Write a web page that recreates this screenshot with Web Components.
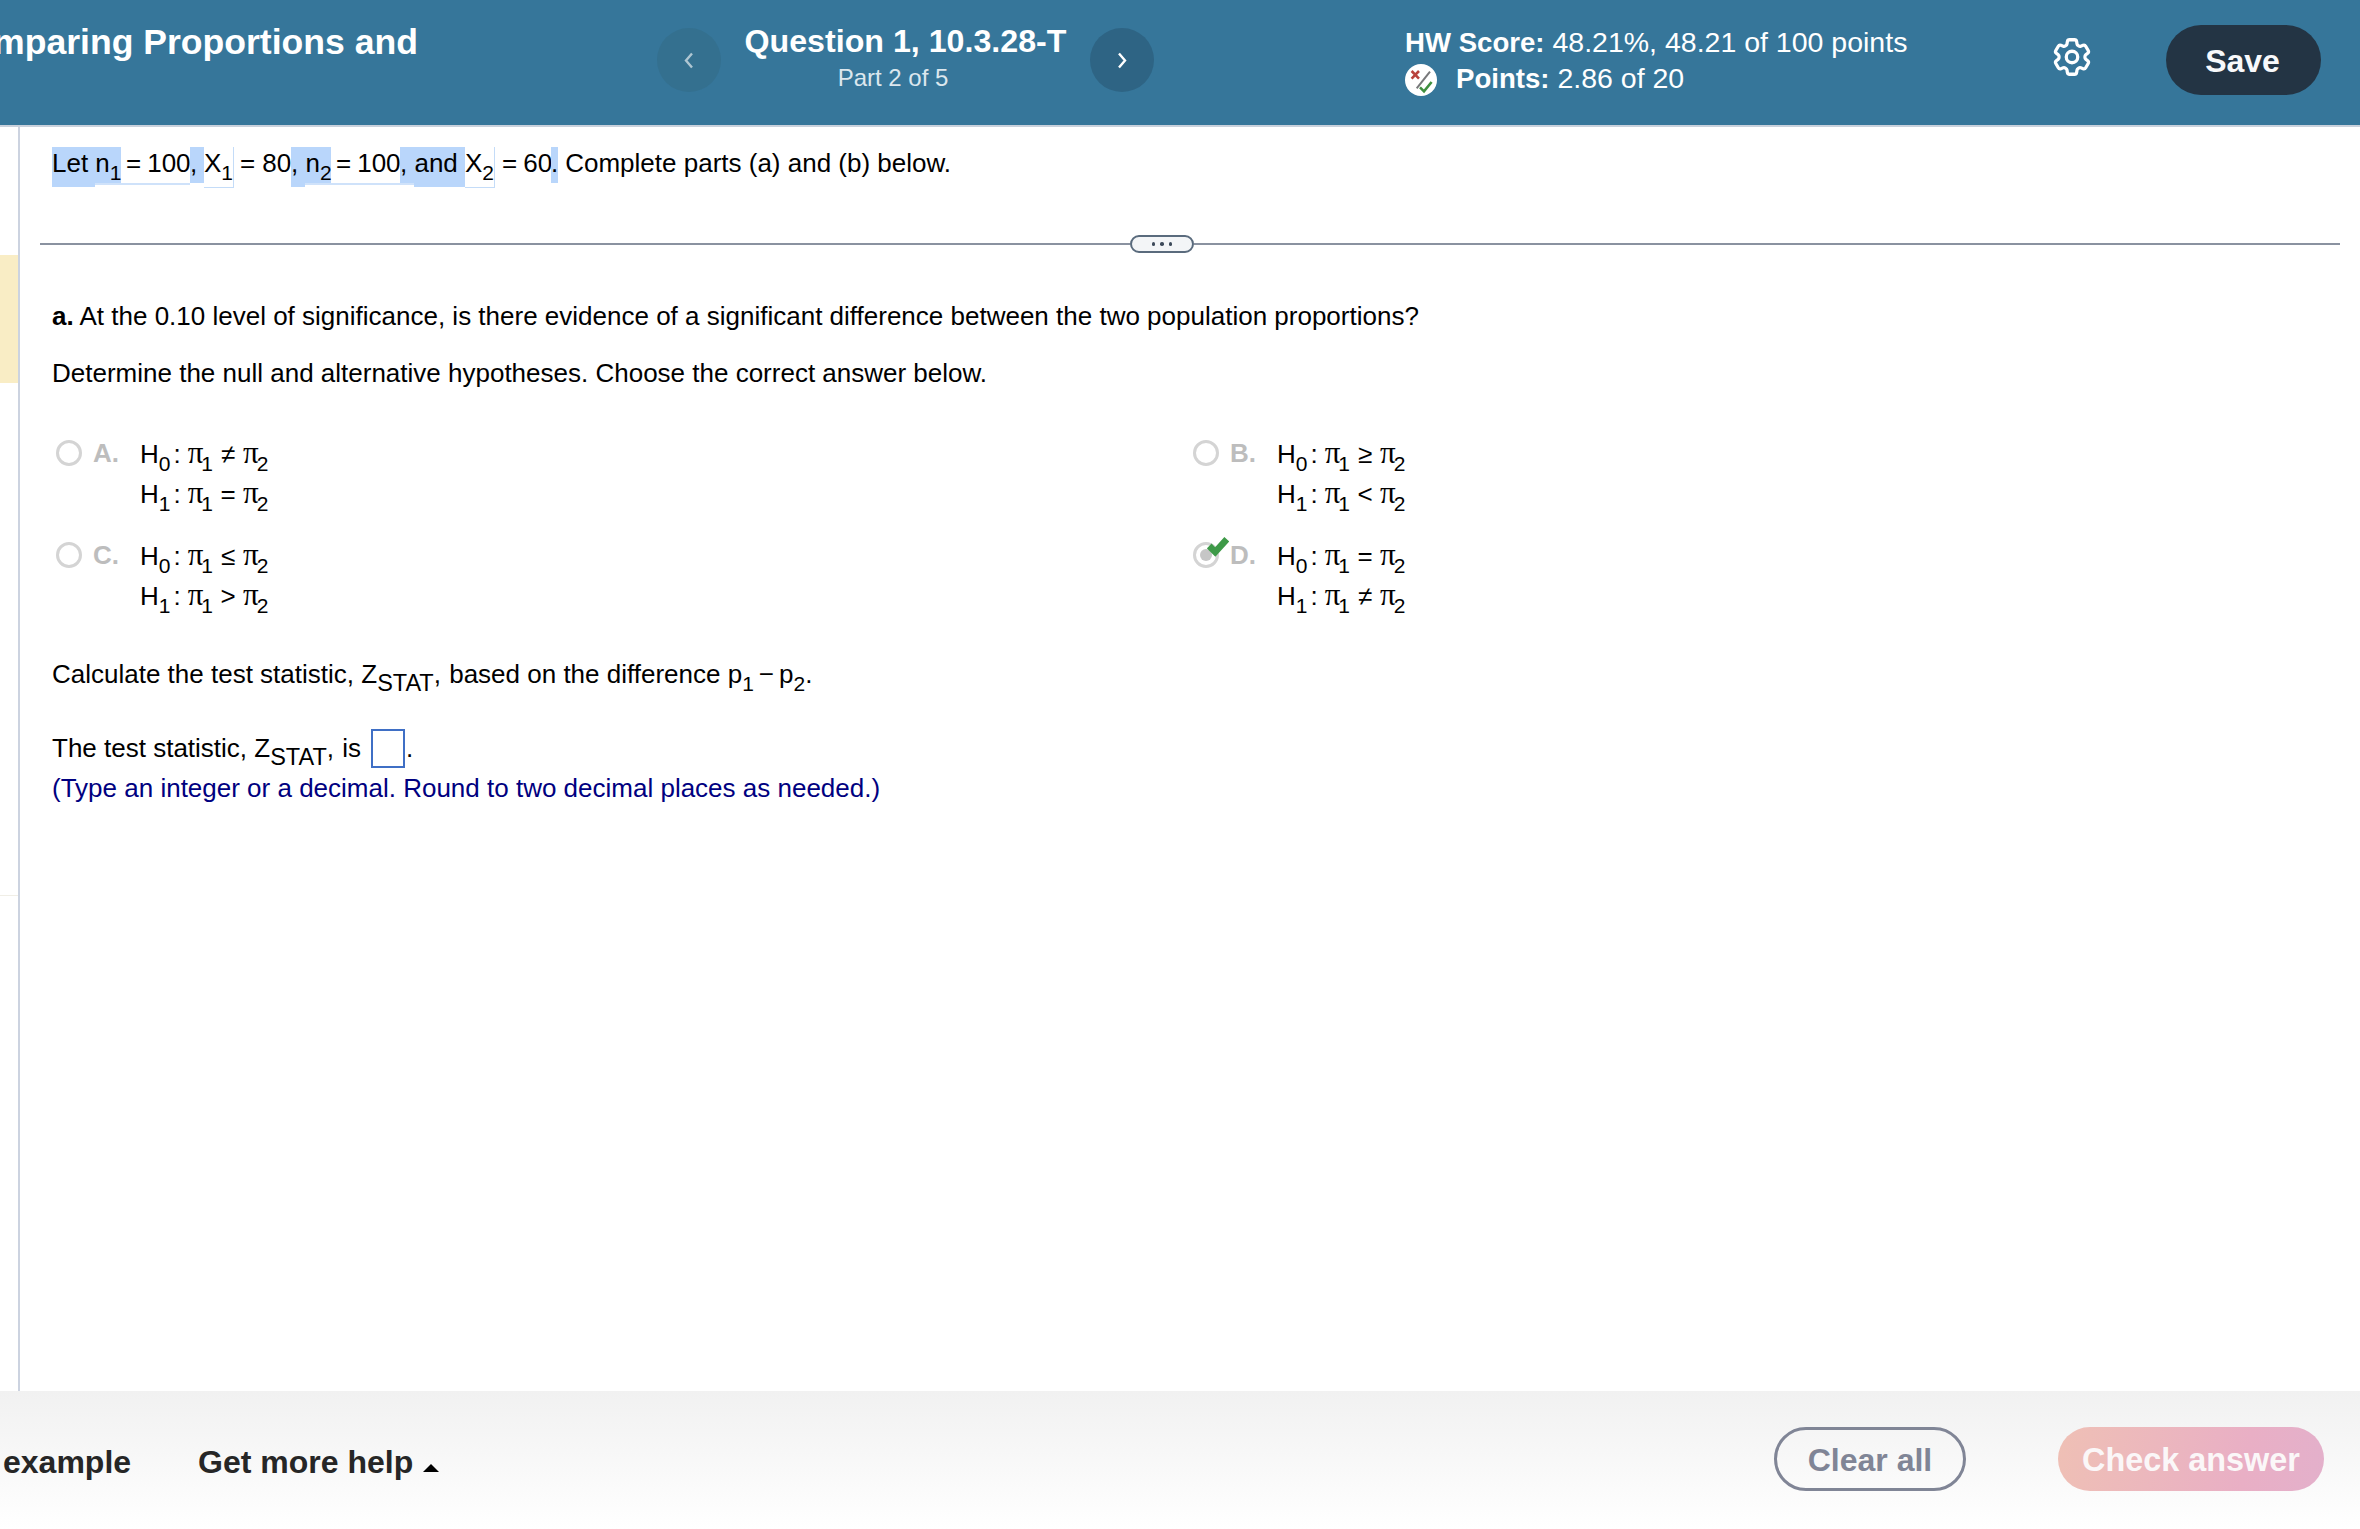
<!DOCTYPE html>
<html lang="en">
<head>
<meta charset="utf-8">
<title>Homework</title>
<style>
  html, body { margin: 0; height: 100%; background: #fff; overflow: hidden; }
  body { font-family: "Liberation Sans", Arial, sans-serif; }
</style>
</head>
<body>
<hw-app>
  <hw-header slot="header"></hw-header>
  <hw-sidebar slot="side"></hw-sidebar>
  <given-line></given-line>
  <pane-divider></pane-divider>
  <question-text></question-text>
  <choice-grid>
    <choice-option letter="A" rel0="≠" rel1="="></choice-option>
    <choice-option letter="B" rel0="≥" rel1="&lt;"></choice-option>
    <choice-option letter="C" rel0="≤" rel1="&gt;"></choice-option>
    <choice-option letter="D" rel0="=" rel1="≠" picked></choice-option>
  </choice-grid>
  <stat-text></stat-text>
  <hw-footer slot="footer"></hw-footer>
</hw-app>

<script>
const MATH_CSS = `
  sub { font-size: 21px; line-height: 0; vertical-align: -8px; }
`;

class HwApp extends HTMLElement {
  constructor() {
    super();
    this.attachShadow({ mode: "open" });
  }
  connectedCallback() {
    this.shadowRoot.innerHTML = `
      <style>
        :host { display: flex; flex-direction: column; width: 2360px; height: 1529px; }
        .middle { flex: 1; display: flex; min-height: 0; }
        .content { flex: 1; min-width: 0; padding: 20px 0 0 32px; }
      </style>
      <slot name="header"></slot>
      <div class="middle">
        <slot name="side"></slot>
        <div class="content"><slot></slot></div>
      </div>
      <slot name="footer"></slot>
    `;
  }
}

class NavButton extends HTMLElement {
  constructor() {
    super();
    this.attachShadow({ mode: "open" });
  }
  connectedCallback() {
    const next = this.getAttribute("dir") == "next";
    const path = next ? "M2 1.5 L8 8.5 L2 15.5" : "M8 1.5 L2 8.5 L8 15.5";
    this.shadowRoot.innerHTML = `
      <style>
        :host {
          display: flex; align-items: center; justify-content: center;
          width: 64px; height: 64px; border-radius: 50%; flex: none;
          background: ${next ? "#2e6484" : "#34708f"};
        }
        svg { width: 10px; height: 17px; fill: none; stroke: #fff; stroke-width: 2.4; opacity: ${next ? 1 : 0.6}; }
      </style>
      <svg viewBox="0 0 10 17"><path d="${path}"/></svg>
    `;
  }
}

class PointsIcon extends HTMLElement {
  constructor() {
    super();
    this.attachShadow({ mode: "open" });
  }
  connectedCallback() {
    this.shadowRoot.innerHTML = `
      <style>
        :host { display: block; width: 32px; height: 32px; flex: none; position: relative; top: 1px; }
        svg { display: block; }
      </style>
      <svg width="32" height="32" viewBox="0 0 32 32" fill="none">
        <circle cx="16" cy="16" r="16" fill="#fff"/>
        <path d="M6.6 7 L14 14.6 M14 7 L6.6 14.6" stroke="#b8423c" stroke-width="2.6"/>
        <path d="M25 7.7 L11.7 24.3" stroke="#77787a" stroke-width="2"/>
        <path d="M15 23.4 L19 27.4 L26.6 18" stroke="#3f8f3f" stroke-width="2.6"/>
      </svg>
    `;
  }
}

class HwHeader extends HTMLElement {
  constructor() {
    super();
    this.attachShadow({ mode: "open" });
  }
  connectedCallback() {
    this.shadowRoot.innerHTML = `
      <style>
        :host {
          display: flex; align-items: flex-start; height: 125px; flex: none;
          background: #36769a; color: #fff; border-bottom: 2px solid #c9d1dc;
        }
        .title {
          width: 418px; flex: none; margin-top: 21px; display: flex; justify-content: flex-end; overflow: hidden;
          font: bold 35.6px/42px "Liberation Sans", Arial, sans-serif; white-space: nowrap;
        }
        .prev { margin: 28px 0 0 239px; }
        .next { margin-top: 28px; }
        .center { width: 369px; text-align: center; padding-top: 22px; }
        .q { font: bold 32.2px/38px "Liberation Sans", Arial, sans-serif; white-space: nowrap; }
        .part { font: 24px/30px "Liberation Sans", Arial, sans-serif; color: #dce7ee; margin-top: 3px; padding-right: 25px; }
        .score { width: 644px; margin: 24px 0 0 251px; font: 28.5px/36px "Liberation Sans", Arial, sans-serif; white-space: nowrap; }
        .pts { display: flex; align-items: center; gap: 19px; margin-top: -1px; }
        b { font-weight: bold; font-size: 27.6px; }
        .gear { width: 46px; height: 46px; margin-top: 34px; flex: none; fill: none; stroke: #fff; stroke-width: 1.7; stroke-linejoin: round; }
        .save {
          width: 155px; height: 70px; margin: 25px 0 0 71px; border-radius: 35px; background: #233444;
          display: flex; align-items: center; justify-content: center; padding: 3px 2px 0 0; box-sizing: border-box;
          font: bold 32px "Liberation Sans", Arial, sans-serif; color: #f8f9fb;
        }
      </style>
      <div class="title">mparing Proportions and</div>
      <nav-button class="prev" dir="prev"></nav-button>
      <div class="center">
        <div class="q">Question 1, 10.3.28-T</div>
        <div class="part">Part 2 of 5</div>
      </div>
      <nav-button class="next" dir="next"></nav-button>
      <div class="score">
        <div><b>HW Score:</b> 48.21%, 48.21 of 100 points</div>
        <div class="pts"><points-icon></points-icon><span><b>Points:</b> 2.86 of 20</span></div>
      </div>
      <svg class="gear" viewBox="0 0 24 24">
        <path d="M9.594 3.94c.09-.542.56-.94 1.11-.94h2.593c.55 0 1.02.398 1.11.94l.213 1.281c.063.374.313.686.645.87.074.04.147.083.22.127.324.196.72.257 1.075.124l1.217-.456a1.125 1.125 0 011.37.49l1.296 2.247a1.125 1.125 0 01-.26 1.431l-1.003.827c-.293.24-.438.613-.431.992a6.759 6.759 0 010 .255c-.007.378.138.75.43.99l1.005.828c.424.35.534.954.26 1.43l-1.298 2.247a1.125 1.125 0 01-1.369.491l-1.217-.456c-.355-.133-.75-.072-1.076.124a6.57 6.57 0 01-.22.128c-.331.183-.581.495-.644.869l-.213 1.28c-.09.543-.56.941-1.11.941h-2.594c-.55 0-1.02-.398-1.11-.94l-.213-1.281c-.062-.374-.312-.686-.644-.87a6.52 6.52 0 01-.22-.127c-.325-.196-.72-.257-1.076-.124l-1.217.456a1.125 1.125 0 01-1.369-.49l-1.297-2.247a1.125 1.125 0 01.26-1.431l1.004-.827c.292-.24.437-.613.43-.992a6.932 6.932 0 010-.255c.007-.378-.138-.75-.43-.99l-1.004-.828a1.125 1.125 0 01-.26-1.43l1.297-2.247a1.125 1.125 0 011.37-.491l1.216.456c.356.133.751.072 1.076-.124.072-.044.146-.087.22-.128.332-.183.582-.495.644-.869l.214-1.281z"/>
        <circle cx="12" cy="12" r="3"/>
      </svg>
      <div class="save">Save</div>
    `;
  }
}

class HwSidebar extends HTMLElement {
  constructor() {
    super();
    this.attachShadow({ mode: "open" });
  }
  connectedCallback() {
    this.shadowRoot.innerHTML = `
      <style>
        :host { display: block; width: 18px; flex: none; border-right: 2px solid #ccd3e0; padding-top: 128px; box-sizing: content-box; }
        .strip { height: 128px; background: #f9edc5; }
        .tick { height: 1px; margin-top: 512px; background: #f0eee6; }
      </style>
      <div class="strip"></div>
      <div class="tick"></div>
    `;
  }
}

class GivenLine extends HTMLElement {
  constructor() {
    super();
    this.attachShadow({ mode: "open" });
  }
  connectedCallback() {
    this.shadowRoot.innerHTML = `
      <style>
        :host { display: flex; height: 41px; font-size: 26px; line-height: 32px; color: #000; white-space: pre; }
        ${MATH_CSS}
        span { display: block; height: 40px; flex: none; box-sizing: border-box; }
        .hl { background: linear-gradient(#b9d6fb, #b9d6fb) 0 0 / 100% 36px no-repeat; }
        .low { background:
          linear-gradient(#b9d6fb, #b9d6fb) 0 0 / 100% 36px no-repeat,
          linear-gradient(#b9d6fb, #b9d6fb) 0 36px / var(--low) 4px no-repeat,
          linear-gradient(#cfe2fa, #cfe2fa) 0 36px / 100% 2px no-repeat; }
        .lowr { background:
          linear-gradient(#b9d6fb, #b9d6fb) 0 0 / 100% 36px no-repeat,
          linear-gradient(#b9d6fb, #b9d6fb) 100% 36px / var(--low) 4px no-repeat,
          linear-gradient(#cfe2fa, #cfe2fa) 0 36px / 100% 2px no-repeat; }
        .bb { background: linear-gradient(#cfe2fa, #cfe2fa) 0 36px / 100% 2px no-repeat; }
        .x { height: 41px; border-right: 1.5px solid #c4dcf8; border-bottom: 1.5px solid #c4dcf8; }
        i { font-style: normal; margin: 0 6px 0 5px; }
        .eq80 { margin: 0 7px 0 6px; }
        .eq60 { margin-left: 7px; }
      </style>
      <span class="low" style="width:69px;--low:43px">Let n<sub>1</sub></span>
      <span class="bb" style="width:69px"><i>=</i>100</span>
      <span class="hl" style="width:14px">, </span>
      <span class="x" style="width:30px">X<sub>1</sub></span>
      <span style="width:57px"><i class="eq80">=</i>80</span>
      <span class="low" style="width:40px;--low:14px">, n<sub>2</sub></span>
      <span class="bb" style="width:69px"><i>=</i>100</span>
      <span class="lowr" style="width:65px;--low:51px">, and </span>
      <span class="x" style="width:30px">X<sub>2</sub></span>
      <span style="width:56px"><i class="eq60">=</i>60</span>
      <span class="hl" style="width:7px">.</span>
      <span> Complete parts (a) and (b) below.</span>
    `;
  }
}

class PaneDivider extends HTMLElement {
  constructor() {
    super();
    this.attachShadow({ mode: "open" });
  }
  connectedCallback() {
    this.shadowRoot.innerHTML = `
      <style>
        :host { display: flex; align-items: center; height: 18px; margin: 47px 20px 0 -12px; }
        .line { height: 2.5px; background: #8a92a0; }
        .left { width: 1090px; flex: none; }
        .right { flex: 1; }
        .pill {
          width: 64px; height: 18px; flex: none; box-sizing: border-box; border: 2px solid #5a6b7d; border-radius: 9px;
          background: #f3f5f7; display: flex; align-items: center; justify-content: center; gap: 5px;
        }
        .pill i { width: 3.5px; height: 3.5px; border-radius: 50%; background: #3d4a5a; }
      </style>
      <div class="line left"></div>
      <div class="pill"><i></i><i></i><i></i></div>
      <div class="line right"></div>
    `;
  }
}

class QuestionText extends HTMLElement {
  constructor() {
    super();
    this.attachShadow({ mode: "open" });
  }
  connectedCallback() {
    this.shadowRoot.innerHTML = `
      <style>
        :host { display: block; margin-top: 47px; font-size: 26px; line-height: 32px; color: #000; }
        p { margin: 0 0 25px; white-space: nowrap; }
        p:last-child { margin-bottom: 0; }
      </style>
      <p><b>a.</b> At the 0.10 level of significance, is there evidence of a significant difference between the two population proportions?</p>
      <p>Determine the null and alternative hypotheses. Choose the correct answer below.</p>
    `;
  }
}

class ChoiceGrid extends HTMLElement {
  constructor() {
    super();
    this.attachShadow({ mode: "open" });
  }
  connectedCallback() {
    this.shadowRoot.innerHTML = `
      <style>
        :host { display: grid; grid-template-columns: 1137px 1fr; row-gap: 22px; margin-top: 45px; }
      </style>
      <slot></slot>
    `;
  }
}

class ChoiceOption extends HTMLElement {
  constructor() {
    super();
    this.attachShadow({ mode: "open" });
  }
  connectedCallback() {
    const letter = this.getAttribute("letter");
    const rel0 = this.getAttribute("rel0").replace("<", "&lt;").replace(">", "&gt;");
    const rel1 = this.getAttribute("rel1").replace("<", "&lt;").replace(">", "&gt;");
    const picked = this.hasAttribute("picked");
    const line = (n, rel) => `<div>H<sub>${n}</sub><span class="colon">:</span><span class="pi first">π</span><sub class="after">1</sub><span class="rel">${rel}</span><span class="pi">π</span><sub class="after">2</sub></div>`;
    this.shadowRoot.innerHTML = `
      <style>
        :host { display: flex; align-items: flex-start; height: 80px; padding-left: 4px; font-size: 26px; line-height: 40px; color: #000; }
        ${MATH_CSS}
        .radio { position: relative; width: 26px; height: 26px; margin-top: 6px; flex: none; box-sizing: border-box; border: 3px solid #d4d4d4; border-radius: 50%; }
        .dot { position: absolute; left: 4px; top: 4px; width: 12px; height: 12px; border-radius: 50%; background: #c6c6c6; }
        .check { position: absolute; left: 11px; top: -9px; width: 22px; height: 21px; fill: none; stroke: #3e9a48; stroke-width: 6; }
        .letter { width: 47px; margin-left: 11px; flex: none; font-weight: bold; font-size: 26px; line-height: 38px; color: #bdbdbd; }
        .colon { margin-left: 3px; }
        .pi { font-family: "Liberation Serif", serif; font-size: 31px; line-height: 0; }
        .first { margin-left: 7px; }
        .after { margin-left: -2px; }
        .rel { display: inline-block; width: 30px; text-align: center; line-height: 0; }
      </style>
      <div class="radio">${picked ? `<div class="dot"></div><svg class="check" viewBox="0 0 20 19"><path d="M2 9 L7.5 14.5 L18 3"/></svg>` : ""}</div>
      <div class="letter">${letter}.</div>
      <div class="math">${line(0, rel0)}${line(1, rel1)}</div>
    `;
  }
}

class StatText extends HTMLElement {
  constructor() {
    super();
    this.attachShadow({ mode: "open" });
  }
  connectedCallback() {
    this.shadowRoot.innerHTML = `
      <style>
        :host { display: block; margin-top: 42px; font-size: 26px; line-height: 32px; color: #000; white-space: nowrap; }
        ${MATH_CSS}
        .stat { font-size: 23.5px; }
        .comma { margin-right: 1px; }
        p { margin: 0; }
        .test { margin-top: 42px; }
        .hint { margin-top: 8px; color: #000080; }
        .minus { margin: 0 5px 0 5px; }
        .box {
          display: inline-block; box-sizing: border-box; width: 34px; height: 39px; margin: -8px 1px -8px 10px;
          border: 2px solid #3f6fc5; vertical-align: -3px;
        }
      </style>
      <p>Calculate the test statistic, Z<sub class="stat">STAT</sub><span class="comma">,</span> based on the difference p<sub>1</sub><span class="minus">−</span>p<sub>2</sub>.</p>
      <p class="test">The test statistic, Z<sub class="stat">STAT</sub><span class="comma">,</span> is<span class="box"></span>.</p>
      <p class="hint">(Type an integer or a decimal. Round to two decimal places as needed.)</p>
    `;
  }
}

class PillButton extends HTMLElement {
  constructor() {
    super();
    this.attachShadow({ mode: "open" });
  }
  connectedCallback() {
    const primary = this.getAttribute("kind") == "primary";
    this.shadowRoot.innerHTML = `
      <style>
        :host {
          display: flex; align-items: center; justify-content: center; box-sizing: border-box;
          width: ${primary ? 266 : 192}px; height: 64px; border-radius: 32px; padding-top: 3px;
          font: bold ${primary ? 32.4 : 32}px "Liberation Sans", Arial, sans-serif;
          ${primary
            ? "background: linear-gradient(100deg, #efc0b5, #e9afc5 70%, #e3b0cb); color: #fbf7f8;"
            : "border: 3px solid #808596; color: #808596;"}
        }
      </style>
      <slot></slot>
    `;
  }
}

class HwFooter extends HTMLElement {
  constructor() {
    super();
    this.attachShadow({ mode: "open" });
  }
  connectedCallback() {
    this.shadowRoot.innerHTML = `
      <style>
        :host {
          display: flex; align-items: flex-start; height: 138px; flex: none; box-sizing: border-box;
          padding: 36px 36px 0 3px; background: linear-gradient(#f1f1f1, #fff);
          font: bold 32px/64px "Liberation Sans", Arial, sans-serif; color: #262626; white-space: nowrap;
        }
        .link { padding-top: 3px; }
        .help { display: flex; margin-left: 67px; }
        .caret { width: 0; height: 0; margin: 34px 0 0 10px; border-left: 8px solid transparent; border-right: 8px solid transparent; border-bottom: 8px solid #000; }
        .clear { margin-left: auto; }
        .check { margin-left: 92px; }
      </style>
      <div class="link">example</div>
      <div class="link help">Get more help<div class="caret"></div></div>
      <pill-button class="clear">Clear all</pill-button>
      <pill-button class="check" kind="primary">Check answer</pill-button>
    `;
  }
}

window.customElements.define("nav-button", NavButton);
window.customElements.define("points-icon", PointsIcon);
window.customElements.define("hw-header", HwHeader);
window.customElements.define("hw-sidebar", HwSidebar);
window.customElements.define("given-line", GivenLine);
window.customElements.define("pane-divider", PaneDivider);
window.customElements.define("question-text", QuestionText);
window.customElements.define("choice-grid", ChoiceGrid);
window.customElements.define("choice-option", ChoiceOption);
window.customElements.define("stat-text", StatText);
window.customElements.define("pill-button", PillButton);
window.customElements.define("hw-footer", HwFooter);
window.customElements.define("hw-app", HwApp);
</script>
</body>
</html>
